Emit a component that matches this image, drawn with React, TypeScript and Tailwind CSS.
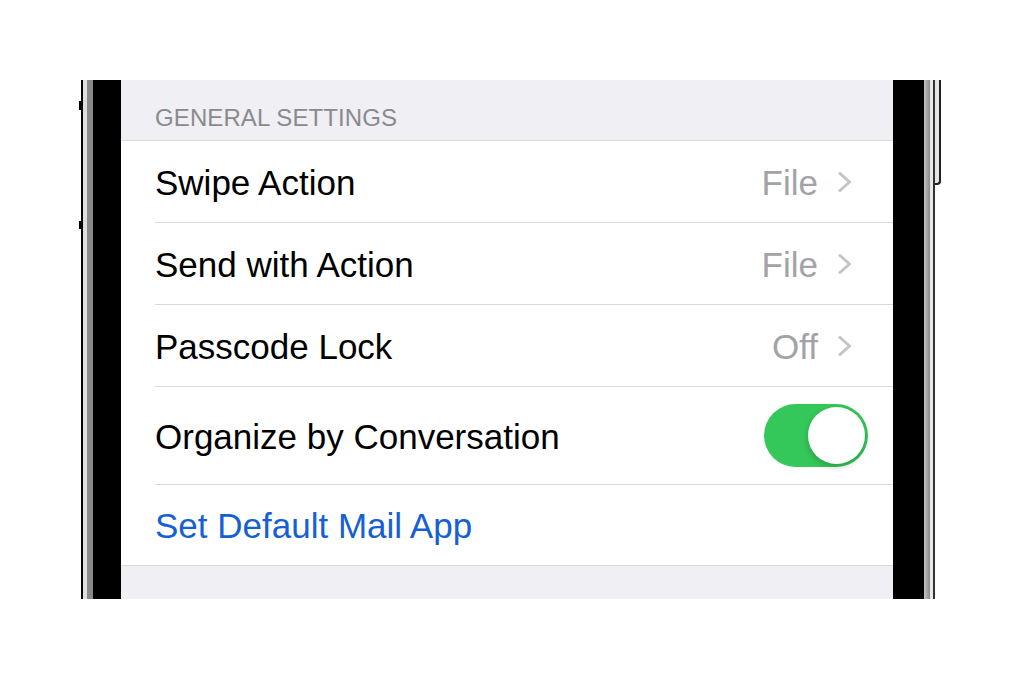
import React from "react"

const font = { fontFamily: '"Liberation Sans", Arial, sans-serif' }

function Chevron() {
  return (
    <svg width="16" height="20" viewBox="0 0 16 20" className="ml-[19px]">
      <path d="M3 1.5 L12.5 10 L3 18.5" fill="none" stroke="#c4c4c7" strokeWidth="3" strokeLinecap="round" strokeLinejoin="round" />
    </svg>
  )
}

function Row({ label, value }: { label: string; value: string }) {
  return (
    <div className="pl-[34px] bg-white">
      <div className="h-[82px] flex items-center justify-between border-b border-[#d9d9dc] pr-[40px] pt-[1px]">
        <span className="text-[35px] leading-none text-black">{label}</span>
        <div className="flex items-center">
          <span className="text-[35px] leading-none text-[#a3a3a7]">{value}</span>
          <Chevron />
        </div>
      </div>
    </div>
  )
}

export default function App() {
  return (
    <div className="w-[1022px] h-[679px] bg-white pt-[80px] pl-[81px] overflow-hidden" style={font}>
      <div className="relative flex h-[519px]">
        {/* side buttons */}
        <div className="absolute left-[-2px] top-[21px] w-[2px] h-[9px] bg-black" />
        <div className="absolute left-[-2px] top-[141px] w-[2px] h-[8px] bg-black" />
        <div className="absolute left-[854px] top-0 w-[6px] h-[105px] bg-[#e6e6e6] border-r-2 border-b-2 border-[#222] rounded-br-sm" />

        {/* left frame */}
        <div className="w-[2px] bg-black" />
        <div className="w-[4px] bg-[#dedede]" />
        <div className="w-[6px] bg-[#8a8a8a]" />
        <div className="w-[28px] bg-black" />

        {/* screen */}
        <div className="w-[772px] flex flex-col bg-[#efeff4]">
          <div className="h-[61px] shrink-0 pt-[26px] pl-[34px] border-b border-[#d9d9dc]">
            <span className="text-[24px] leading-none text-[#8a8a8e] tracking-[0.1px]">GENERAL SETTINGS</span>
          </div>
          <Row label="Swipe Action" value="File" />
          <Row label="Send with Action" value="File" />
          <Row label="Passcode Lock" value="Off" />
          <div className="pl-[34px] bg-white">
            <div className="h-[98px] flex items-center justify-between border-b border-[#d9d9dc] pr-[25px]">
              <span className="text-[35px] leading-none text-black pt-[1px]">Organize by Conversation</span>
              <div className="w-[104px] h-[63px] rounded-full bg-[#34c759] flex items-center justify-end pr-[3px]">
                <div className="w-[57px] h-[57px] rounded-full bg-white shadow-[0_3px_6px_rgba(0,0,0,0.2)]" />
              </div>
            </div>
          </div>
          <div className="h-[81px] shrink-0 bg-white border-b border-[#d9d9dc] pl-[34px] flex items-center pt-[1px]">
            <span className="text-[35px] leading-none text-[#1560d4]">Set Default Mail App</span>
          </div>
          <div className="flex-1" />
        </div>

        {/* right frame */}
        <div className="w-[31px] bg-black" />
        <div className="w-[6px] bg-gradient-to-r from-[#c4c4c4] to-[#8a8a8a]" />
        <div className="w-[3px] bg-[#e8e8e8]" />
        <div className="w-[2px] bg-[#333]" />
      </div>
    </div>
  )
}
